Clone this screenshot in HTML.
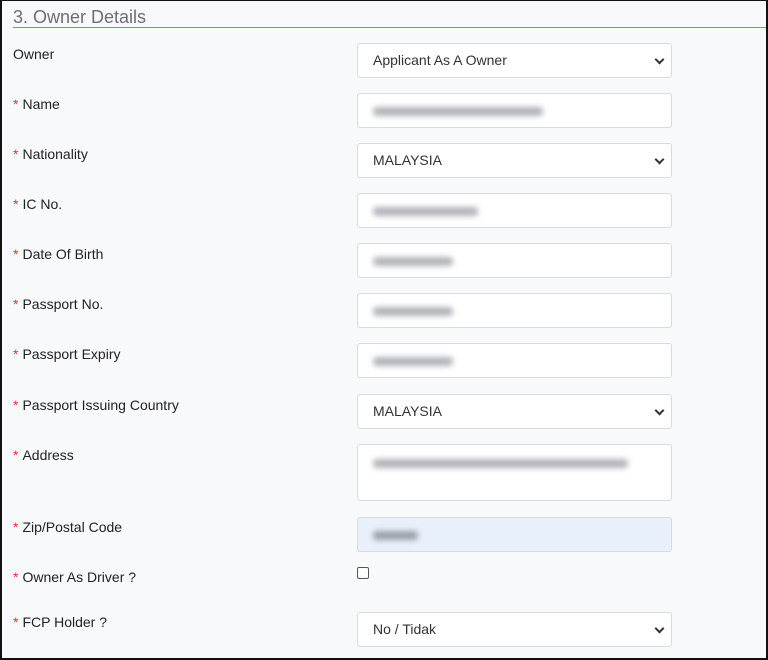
<!DOCTYPE html>
<html><head><style>
*{box-sizing:border-box;margin:0;padding:0}
body{width:768px;height:660px;background:#f8f9fb;font-family:"Liberation Sans",sans-serif;position:relative;overflow:hidden}
.frame{position:absolute;left:0;top:0;width:768px;height:660px;border:2px solid #111;border-top-width:1px}
h3{position:absolute;left:13px;top:7px;font-weight:normal;font-size:18px;color:#6b6f75}
.line{position:absolute;left:13px;right:2px;top:27px;height:1px;background:#5aa5a8}
.lb{position:absolute;left:13px;font-size:14px;color:#222;line-height:16px}
.lb b{color:#d33;font-weight:normal;margin-right:4px}
.f{position:absolute;left:357px;width:315px;height:35px;background:#fff;border:1px solid #d8dbe0;border-radius:3px;font-size:14px;color:#333;padding-left:15px;line-height:33px}
.sel::after{content:"";position:absolute;right:8px;top:12px;width:5px;height:5px;border-right:2px solid #333;border-bottom:2px solid #333;transform:rotate(45deg)}
.bl{display:inline-block;height:9px;background:#b0b3b9;border-radius:4px;filter:blur(3px);vertical-align:middle}
</style></head><body>
<div class="frame"></div>
<h3>3. Owner Details</h3><div class="line"></div>

<div class="lb" style="top:46px">Owner</div>
<div class="f sel" style="top:43px">Applicant As A Owner</div>

<div class="lb" style="top:96px"><b>*</b>Name</div>
<div class="f" style="top:93px"><span class="bl" style="width:170px"></span></div>

<div class="lb" style="top:146px"><b>*</b>Nationality</div>
<div class="f sel" style="top:143px">MALAYSIA</div>

<div class="lb" style="top:196px"><b>*</b>IC No.</div>
<div class="f" style="top:193px"><span class="bl" style="width:105px"></span></div>

<div class="lb" style="top:246px"><b>*</b>Date Of Birth</div>
<div class="f" style="top:243px"><span class="bl" style="width:80px"></span></div>

<div class="lb" style="top:296px"><b>*</b>Passport No.</div>
<div class="f" style="top:293px"><span class="bl" style="width:80px"></span></div>

<div class="lb" style="top:346px"><b>*</b>Passport Expiry</div>
<div class="f" style="top:343px"><span class="bl" style="width:80px"></span></div>

<div class="lb" style="top:397px"><b>*</b>Passport Issuing Country</div>
<div class="f sel" style="top:394px">MALAYSIA</div>

<div class="lb" style="top:447px"><b>*</b>Address</div>
<div class="f" style="top:444px;height:57px;line-height:34px"><span class="bl" style="width:255px"></span></div>

<div class="lb" style="top:519px"><b>*</b>Zip/Postal Code</div>
<div class="f" style="top:517px;background:#e8f0fb"><span class="bl" style="width:45px;background:#9a9ea6"></span></div>

<div class="lb" style="top:569px"><b>*</b>Owner As Driver ?</div>
<div style="position:absolute;left:357px;top:567px;width:12px;height:12px;border:1px solid #555;border-radius:2px;background:#fff"></div>

<div class="lb" style="top:614px"><b>*</b>FCP Holder ?</div>
<div class="f sel" style="top:612px">No / Tidak</div>
</body></html>
